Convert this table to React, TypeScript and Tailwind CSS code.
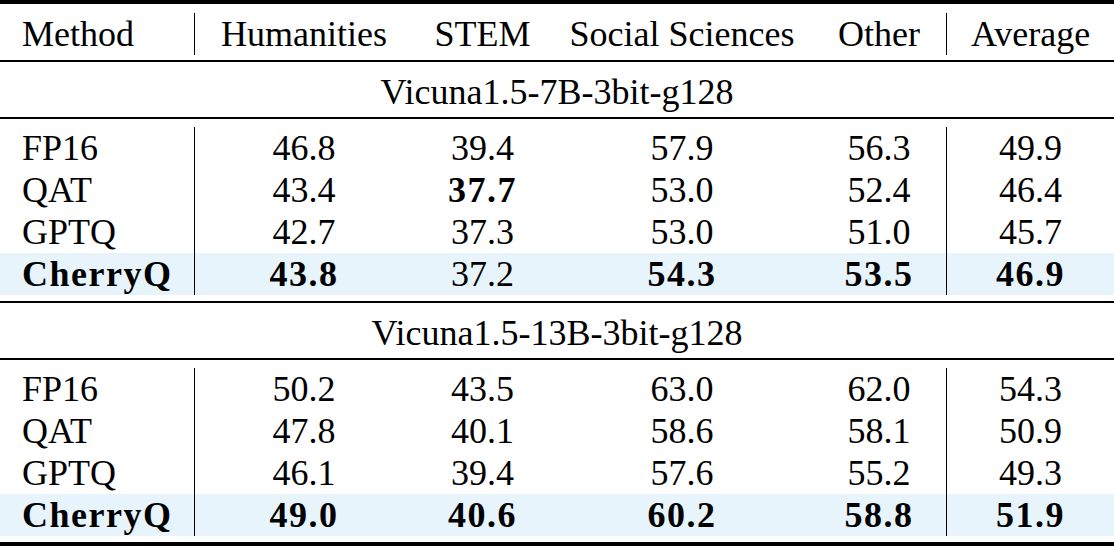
const cols = 'grid grid-cols-[195px_218px_139px_260px_135px_167px] h-[42px]'

const headers = ['Humanities', 'STEM', 'Social Sciences', 'Other', 'Average']

// a leading "*" marks a bold cell
const blocks = [
  {
    title: 'Vicuna1.5-7B-3bit-g128',
    rows: [
      ['FP16', '46.8', '39.4', '57.9', '56.3', '49.9'],
      ['QAT', '43.4', '*37.7', '53.0', '52.4', '46.4'],
      ['GPTQ', '42.7', '37.3', '53.0', '51.0', '45.7'],
      ['*CherryQ', '*43.8', '37.2', '*54.3', '*53.5', '*46.9'],
    ],
  },
  {
    title: 'Vicuna1.5-13B-3bit-g128',
    rows: [
      ['FP16', '50.2', '43.5', '63.0', '62.0', '54.3'],
      ['QAT', '47.8', '40.1', '58.6', '58.1', '50.9'],
      ['GPTQ', '46.1', '39.4', '57.6', '55.2', '49.3'],
      ['*CherryQ', '*49.0', '*40.6', '*60.2', '*58.8', '*51.9'],
    ],
  },
]

function Cell({ value, index }: { value: string; index: number }) {
  const bold = value.startsWith('*')
  const text = bold ? value.slice(1) : value
  return (
    <div
      className={
        (index === 0 ? 'pl-[22px] text-left border-r border-black ' : 'text-center ') +
        (index === 4 ? 'border-r border-black ' : '') +
        (bold ? 'font-bold tracking-[1.5px]' : '')
      }
    >
      {text}
    </div>
  )
}

export default function App() {
  return (
    <div className="w-[1114px] h-[548px] bg-white text-black text-[36px] leading-[42px] font-[Liberation_Serif,Times_New_Roman,serif]">
      <div className="h-[4px] bg-black" />
      <div className="pt-[9px] pb-[5px]">
        <div className={cols}>
          <div className="pl-[22px] border-r border-black">Method</div>
          {headers.map((h, i) => (
            <div key={h} className={'text-center ' + (i === 3 ? 'border-r border-black' : '')}>
              {h}
            </div>
          ))}
        </div>
      </div>
      {blocks.map((block) => (
        <div key={block.title}>
          <div className="h-[2px] bg-black" />
          <div className="pt-[9px] pb-[4px] text-center h-[55px]">{block.title}</div>
          <div className="h-[2px] bg-black" />
          <div className="pt-[8px] pb-[6px]">
            {block.rows.map((row, r) => (
              <div key={r} className={cols + (r === 3 ? ' bg-[#e8f4fc]' : '')}>
                {row.map((v, i) => (
                  <Cell key={i} value={v} index={i} />
                ))}
              </div>
            ))}
          </div>
        </div>
      ))}
      <div className="h-[4px] bg-black" />
    </div>
  )
}
